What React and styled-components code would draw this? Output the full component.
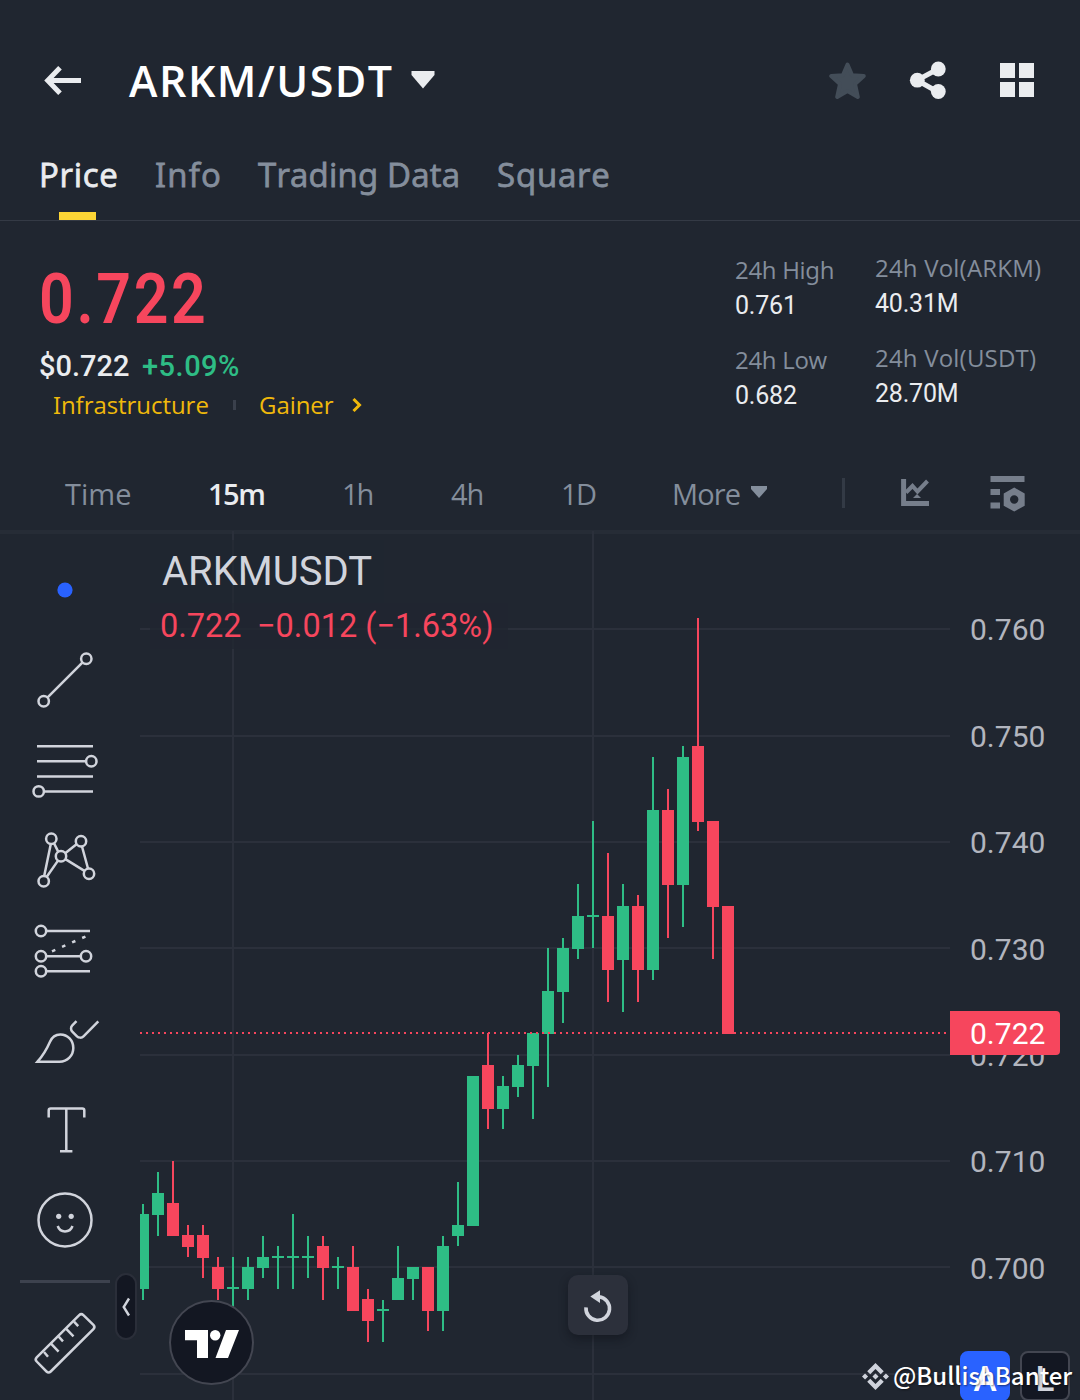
import React from 'react';
import styled, { createGlobalStyle } from 'styled-components';
import { SiBinance } from 'react-icons/si';

const colors = {
  bg: '#202630',
  text: '#eaecef',
  muted: '#848e9c',
  up: '#2ebd85',
  down: '#f6465d',
  brand: '#fcd535',
  tag: '#f0b90b',
  grid: '#2b303b',
  icon: '#d1d4dc',
  dark: '#131722',
};

const GlobalStyle = createGlobalStyle`
  * {
    box-sizing: border-box;
  }
  body {
    margin: 0;
    background-color: ${colors.bg};
  }
`;

const Page = styled.div`
  width: 1080px;
  height: 1400px;
  overflow: hidden;
  position: relative;
  display: flex;
  flex-direction: column;
  background-color: ${colors.bg};
  color: ${colors.text};
  font-family: "Open Sans", "Noto Sans", sans-serif;
  font-feature-settings: "ss01";
  white-space: nowrap;

  svg {
    display: block;
    flex: none;
  }
`;

/* header */

const Header = styled.header`
  height: 80px;
  margin: 40px 0 1px;
  padding: 0 44px 0 43px;
  display: flex;
  align-items: center;
`;

const Title = styled.h1`
  width: 262px;
  margin: 2px 20px 0 48px;
  font-size: 43px;
  line-height: 60px;
  font-weight: 600;
  letter-spacing: 1.5px;
  color: #ffffff;
`;

const Actions = styled.div`
  display: flex;
  align-items: center;
  margin-left: auto;
`;

const ShareSlot = styled.div`
  margin: 0 53px 0 42px;
`;

/* tabs */

const Tabs = styled.nav`
  height: 100px;
  flex: none;
  display: grid;
  grid-template-columns: 116px 103px 239px auto;
  padding-left: 39px;
  border-bottom: 1px solid #343a45;
`;

const Tab = styled.div`
  width: fit-content;
  padding-top: 34px;
  display: flex;
  flex-direction: column;
  align-items: center;
  font-size: 33px;
  line-height: 40px;
  letter-spacing: ${({ $spacing }) => $spacing}px;
  color: ${({ $active }) => ($active ? colors.text : colors.muted)};
  -webkit-text-stroke: 0.8px currentColor;
`;

const Underline = styled.div`
  width: 37px;
  height: 8px;
  margin: 17px 2px 0 0;
  background-color: ${colors.brand};
`;

/* ticker summary */

const Summary = styled.section`
  height: 237px;
  flex: none;
  display: flex;
  padding-left: 39px;
`;

const Quote = styled.div`
  width: 696px;
  padding-top: 48px;
  font-family: Roboto, sans-serif;
`;

const LastPrice = styled.div`
  font-size: 70px;
  line-height: 60px;
  font-weight: 600;
  letter-spacing: 3px;
  color: ${colors.down};
  transform: scaleX(0.87);
  transform-origin: left;
`;

const Change = styled.div`
  display: grid;
  grid-template-columns: 103px auto;
  margin-top: 20px;
  font-size: 29px;
  line-height: 34px;
  font-weight: 500;
`;

const Percent = styled.span`
  letter-spacing: 0.5px;
  color: ${colors.up};
`;

const Tags = styled.div`
  display: flex;
  align-items: center;
  margin-top: 5px;
  padding-left: 14px;
  font-family: "Open Sans", sans-serif;
  font-size: 24px;
  line-height: 34px;
  letter-spacing: -0.05px;
  color: ${colors.tag};
`;

const Tag = styled.span`
  width: ${({ $width }) => $width}px;
`;

const TagDivider = styled.i`
  width: 3px;
  height: 10px;
  margin: 0 23px 0 24px;
  background-color: #3a404c;
`;

const StatColumn = styled.div`
  width: ${({ $width }) => $width}px;
  padding-top: ${({ $top }) => $top}px;
`;

const Stat = styled.div`
  height: 90px;
  font-size: 24px;
  line-height: 34px;
`;

const StatLabel = styled.div`
  letter-spacing: ${({ $spacing }) => $spacing}px;
  color: ${colors.muted};
`;

const StatValue = styled.div`
  margin-top: 2px;
  font-family: Roboto, sans-serif;
  font-size: 25px;
  letter-spacing: -0.2px;
`;

/* interval bar */

const Intervals = styled.div`
  height: 72px;
  flex: none;
  display: grid;
  grid-template-columns: 143px 134px 109px 110px 111px 170px 59px 89px auto;
  align-items: center;
  padding-left: 65px;
  font-size: 29px;
  line-height: 40px;
  color: ${colors.muted};
`;

const Interval = styled.span`
  display: flex;
  align-items: center;
  gap: 11px;
  letter-spacing: ${({ $spacing }) => $spacing || 0}px;
  ${({ $active }) => $active && `color: ${colors.text}; font-weight: 600;`}
`;

const Divider = styled.div`
  width: 3px;
  height: 30px;
  margin-bottom: 2px;
  background-color: #333a45;
`;

/* chart */

const Chart = styled.section`
  position: relative;
  height: 870px;
  display: flex;
  box-shadow: inset 0 4px 0 #262c36;
`;

const Toolbar = styled.aside`
  width: 140px;
  flex: none;
  display: flex;
  flex-direction: column;
  padding: 15px 0 0 20px;
`;

const ToolIcon = styled.svg`
  width: 90px;
  height: 90px;
  fill: none;
  stroke: ${colors.icon};
  stroke-width: 2.5;
`;

const ToolSeparator = styled.div`
  width: 90px;
  height: 3px;
  flex: none;
  margin: 15px 0;
  background-color: #3d424e;
`;

const Legend = styled.div`
  position: absolute;
  left: 150px;
  top: 10px;
  font-family: Roboto, sans-serif;
`;

const Symbol = styled.div`
  width: 234px;
  height: 63px;
  padding: 8px 0 0 12px;
  font-size: 40px;
  line-height: 48px;
  color: ${colors.icon};
  background-color: rgba(32, 38, 48, 0.6);
`;

const LegendValues = styled.div`
  display: grid;
  grid-template-columns: 97px auto;
  width: 358px;
  height: 46px;
  padding-left: 10px;
  font-size: 32.5px;
  line-height: 47px;
  color: ${colors.down};
  background-color: rgba(32, 38, 48, 0.75);
`;

const Collapse = styled.div`
  position: absolute;
  left: 115px;
  top: 743px;
  width: 22px;
  height: 67px;
  display: flex;
  align-items: center;
  justify-content: center;
  border: 2px solid #2a2e39;
  border-radius: 11px;
  background-color: ${colors.dark};
`;

const Badge = styled.div`
  position: absolute;
  left: 169px;
  top: 770px;
  width: 85px;
  height: 85px;
  display: flex;
  align-items: center;
  justify-content: center;
  padding-top: 2px;
  border: 2.5px solid #434651;
  border-radius: 50%;
  background-color: ${colors.dark};
`;

const Reset = styled.div`
  position: absolute;
  left: 568px;
  top: 745px;
  width: 60px;
  height: 60px;
  border-radius: 10px;
  background-color: #2c303b;
  box-shadow: 0 4px 10px rgba(10, 13, 20, 0.45);
`;

const ScaleButtons = styled.div`
  position: absolute;
  left: 960px;
  top: 821px;
  display: flex;
  gap: 10px;
`;

const ScaleButton = styled.div`
  width: 50px;
  height: 50px;
  border-radius: 8px;
  border: 2px solid ${({ $active }) => ($active ? '#2962ff' : '#434651')};
  background-color: ${({ $active }) => ($active ? '#2962ff' : colors.dark)};
  color: ${({ $active }) => ($active ? '#ffffff' : colors.icon)};
  font-family: Roboto, sans-serif;
  font-size: 35px;
  font-weight: 500;
  line-height: 54px;
  text-align: center;
`;

const Handle = styled.div`
  position: absolute;
  left: 862px;
  top: 1357px;
  display: flex;
  align-items: center;
  gap: 4px;
  font-family: "Noto Sans CJK SC", sans-serif;
  font-size: 24px;
  font-weight: 500;
  line-height: 36px;
  color: #ffffff;
  text-shadow: 1px 1px 2px rgba(0, 0, 0, 0.5);

  svg {
    margin-top: 2px;
    color: #cfd3dc;
  }
`;

// open, high, low, close in thousandths
const candles = [
  [698, 706, 697, 705], [705, 709, 703, 707], [706, 710, 703, 703], [703, 704, 701, 702],
  [703, 704, 699, 701], [700, 701, 697, 698], [698, 701, 696, 698], [698, 701, 697, 700],
  [700, 703, 699, 701], [701, 702, 698, 701], [701, 705, 698, 701], [701, 703, 699, 701],
  [702, 703, 697, 700], [700, 701, 698, 700], [700, 702, 696, 696], [697, 698, 693, 695],
  [696, 697, 693, 696], [697, 702, 697, 699], [699, 700, 697, 700], [700, 700, 694, 696],
  [696, 703, 694, 702], [703, 708, 702, 704], [704, 718, 704, 718], [719, 722, 713, 715],
  [715, 718, 713, 717], [717, 720, 716, 719], [719, 722, 714, 722], [722, 730, 717, 726],
  [726, 731, 723, 730], [730, 736, 729, 733], [733, 742, 730, 733], [733, 739, 725, 728],
  [729, 736, 724, 734], [734, 735, 725, 728], [728, 748, 727, 743], [743, 745, 731, 736],
  [736, 749, 732, 748], [749, 761, 741, 742], [742, 742, 729, 734], [734, 734, 722, 722],
];

const levels = [760, 750, 740, 730, 720, 710, 700, 690];

const yOf = (price) => Math.round(99.2 + (760 - price) * 10.633);
const wickY = (price) => Math.round(99 + (760 - price) * 10.643);

const Candle = ({ index, data }) => {
  const [open, high, low, close] = data;
  const x = 3 + index * 15;
  const flat = open === close;
  const top = yOf(Math.max(open, close));
  const bottom = yOf(Math.min(open, close)) + 1;
  const left = Math.max(0, x - 6);
  return (
    <g fill={close >= open ? colors.up : colors.down}>
      <rect x={x - 1} y={wickY(high)} width="2" height={wickY(low) - wickY(high)} />
      <rect x={left} y={flat ? top - 1 : top} width={x + 6 - left} height={flat ? 2 : bottom - top} />
    </g>
  );
};

const PriceChart = () => (
  <svg width="940" height="870" viewBox="0 0 940 870">
    <g fill={colors.grid}>
      {levels.map((level) => (
        <rect key={level} x="0" y={yOf(level) - 1} width="810" height="2" />
      ))}
      <rect x="92" y="1" width="2" height="869" />
      <rect x="452" y="1" width="2" height="869" />
    </g>
    {candles.map((data, i) => (
      <Candle key={i} index={i} data={data} />
    ))}
    <line x1="0" x2="810" y1="503" y2="503" stroke={colors.down} strokeWidth="2" strokeDasharray="2 4" />
    <g fontFamily="Roboto, sans-serif" fontSize="30" fill="#b2b5be">
      {levels.slice(0, 7).map((level) => (
        <text key={level} x="830" y={110.3 + (760 - level) * 10.643}>{(level / 1000).toFixed(3)}</text>
      ))}
      <path d="M810 481h106a4 4 0 0 1 4 4v36a4 4 0 0 1-4 4H810z" fill={colors.down} />
      <text x="830" y="514" fill="#ffffff">0.722</text>
    </g>
  </svg>
);

const DrawingTools = () => (
  <Toolbar>
    <ToolIcon viewBox="0 0 90 90">
      <circle cx="45" cy="45" r="7.6" fill="#2962ff" stroke="none" />
    </ToolIcon>
    <ToolIcon viewBox="0 0 90 90">
      <circle cx="23.7" cy="66.3" r="5.2" />
      <circle cx="66.3" cy="23.7" r="5.2" />
      <path d="M27.4 62.6 62.6 27.4" />
    </ToolIcon>
    <ToolIcon viewBox="0 0 90 90">
      <path d="M17 21.3h56M17 36.3h49M17 51.4h56M24 66.4h49" />
      <circle cx="71.3" cy="36.3" r="5.2" />
      <circle cx="18.7" cy="66.4" r="5.2" />
    </ToolIcon>
    <ToolIcon viewBox="0 0 90 90">
      <path d="M30.8 28.9 24.2 61.1M34 28.2l4.2 8.4M45.2 38.3l11.3-9M62 31.5l6 22M45.4 44.1l19 11.8M38 45.6 26.6 62" />
      <circle cx="31.3" cy="23.7" r="5.2" />
      <circle cx="61" cy="26.3" r="5.2" />
      <circle cx="41" cy="41.3" r="5.2" />
      <circle cx="69" cy="58.7" r="5.2" />
      <circle cx="23.7" cy="66.3" r="5.2" />
    </ToolIcon>
    <ToolIcon viewBox="0 0 90 90">
      <path d="M26 26h44M26 51.3h35M26 66.3h44" />
      <path d="M32 46.4 66 31.3" strokeDasharray="3.6 7.4" />
      <circle cx="21" cy="26" r="5.2" />
      <circle cx="21" cy="51.3" r="5.2" />
      <circle cx="66" cy="51.3" r="5.2" />
      <circle cx="21" cy="66.3" r="5.2" />
    </ToolIcon>
    <ToolIcon viewBox="0 0 90 90">
      <path d="M17.5 66.7H39.5C47.5 66.7 53.3 60.5 53.3 53 53.3 45.5 47.8 39.5 40.3 39.5 35 39.5 31.8 42.5 30 46.8 26.6 54.6 23.5 60 17.5 66.7Z" />
      <path d="M56.5 26.2 52.3 30.4C50.6 32.1 50.6 34.9 52.3 36.6L57 41.3C58.7 43 61.8 43.1 63.5 41.4L78.300 26.400" />
    </ToolIcon>
    <ToolIcon viewBox="0 0 90 90">
      <path d="M28.700 32.500v-7a2 2 0 0 1 2-2h31.600a2 2 0 0 1 2 2v7M46.300 23.500v42.800M40 66.300h12.400" />
    </ToolIcon>
    <ToolIcon viewBox="0 0 90 90">
      <circle cx="45" cy="45" r="26.5" />
      <circle cx="38.7" cy="41.3" r="2.6" fill={colors.icon} stroke="none" />
      <circle cx="51.2" cy="41.3" r="2.6" fill={colors.icon} stroke="none" />
      <path d="M37.700 51c1.200 3.500 4 5.400 7.300 5.400s6.300-1.900 7.500-5.400" />
    </ToolIcon>
    <ToolSeparator />
    <ToolIcon viewBox="0 0 90 90" strokeLinejoin="round">
      <path d="M59.200 17.200a3 3 0 0 1 4.200 0l10 9.700a3 3 0 0 1 0 4.200L30.700 73.500a3 3 0 0 1-4.200 0L16.700 63.500a3 3 0 0 1 0-4.200Z" />
      <path d="M24 54l4 4.700M31 45.700l7.600 8M38.700 38.700l4.300 4.600M46 30.700l7.500 7.600M54 23.700l4.200 4.500" />
    </ToolIcon>
  </Toolbar>
);

const stats = [
  { top: 32, width: 140, spacing: -0.3, items: [['24h High', '0.761'], ['24h Low', '0.682']] },
  { top: 30, width: 180, spacing: 0.2, items: [['24h Vol(ARKM)', '40.31M'], ['24h Vol(USDT)', '28.70M']] },
];

const App = () => {
  return (
    <Page>
      <GlobalStyle />
      <Header>
        <svg width="38" height="34" viewBox="0 0 38 34" fill="none" stroke={colors.text} strokeWidth="5">
          <path d="M38 17.500H4.500M17 4.700 4.700 17.500 17 30.300" />
        </svg>
        <Title>ARKM/USDT</Title>
        <svg width="24" height="20" viewBox="0 0 24 20" fill={colors.text}>
          <path d="M.5 1h23v4L12 18.500.5 5z" />
        </svg>
        <Actions>
          <svg width="38" height="40" viewBox="0 0 38 40" fill="#434d58" stroke="#434d58" strokeWidth="4" strokeLinejoin="round">
            <path d="M18.500 4.500 23.100 15.300 34.800 16 26 24 28.800 37 18.500 31 8.200 37 11 24 2.200 16 13.900 15.300Z" />
          </svg>
          <ShareSlot>
            <svg width="38" height="38" viewBox="0 0 38 38" fill={colors.text}>
              <path d="M29 8 8 19.200 29 31" fill="none" stroke={colors.text} strokeWidth="5" />
              <circle cx="8.300" cy="19.200" r="7.400" />
              <circle cx="29.300" cy="8" r="7.400" />
              <circle cx="29.300" cy="30.500" r="7.400" />
            </svg>
          </ShareSlot>
          <svg width="36" height="36" viewBox="0 0 36 36" fill={colors.text}>
            <path d="M0 1h15v15H0zM19 1h15v15H19zM0 20h15v15H0zM19 20h15v15H19z" />
          </svg>
        </Actions>
      </Header>

      <Tabs>
        <Tab $active $spacing={0.7}>
          Price
          <Underline />
        </Tab>
        <Tab $spacing={1.2}>Info</Tab>
        <Tab $spacing={0.2}>Trading Data</Tab>
        <Tab $spacing={0.8}>Square</Tab>
      </Tabs>

      <Summary>
        <Quote>
          <LastPrice>0.722</LastPrice>
          <Change>
            <span>$0.722</span>
            <Percent>+5.09%</Percent>
          </Change>
          <Tags>
            <Tag $width={156}>Infrastructure</Tag>
            <TagDivider />
            <Tag $width={93}>Gainer</Tag>
            <svg width="10" height="16" viewBox="0 0 10 16" fill="none" stroke={colors.tag} strokeWidth="3">
              <path d="M1.500 2 7.500 8 1.500 14" />
            </svg>
          </Tags>
        </Quote>
        {stats.map(({ top, width, spacing, items }) => (
          <StatColumn key={top} $top={top} $width={width}>
            {items.map(([label, value]) => (
              <Stat key={label}>
                <StatLabel $spacing={spacing}>{label}</StatLabel>
                <StatValue>{value}</StatValue>
              </Stat>
            ))}
          </StatColumn>
        ))}
      </Summary>

      <Intervals>
        <Interval>Time</Interval>
        <Interval $active $spacing={-1.5}>15m</Interval>
        <Interval $spacing={-2}>1h</Interval>
        <Interval $spacing={-1}>4h</Interval>
        <Interval $spacing={-1.6}>1D</Interval>
        <Interval $spacing={-0.9}>
          More
          <svg width="16" height="16" viewBox="0 0 16 16" fill={colors.muted}>
            <path d="M0 0h16v3L8 12 0 3z" />
          </svg>
        </Interval>
        <Divider />
        <svg width="28" height="34" viewBox="0 0 28 34" fill="none" stroke="#767e8b" strokeWidth="4">
          <path d="M2.600 2v24.500H28" strokeWidth="5" />
          <path d="M5 15.500 11.500 9l5 5.500L26.500 4" />
          <path d="M12 21h8l-4-4z" fill="#767e8b" stroke="none" />
        </svg>
        <svg width="36" height="38" viewBox="0 0 36 38" fill="#767e8b">
          <path d="M.5 1h34v6H.5zM.5 14H10v6H.5zM.5 27.500H10v6H.5z" />
          <path fillRule="evenodd" d="M24.200 12.500 34.700 18.500v12.200L24.200 36.500 13.700 30.700V18.500zM24.200 20.300a4.200 4.200 0 1 0 0 8.400 4.200 4.200 0 0 0 0-8.400z" />
        </svg>
      </Intervals>

      <Chart>
        <DrawingTools />
        <PriceChart />
        <Legend>
          <Symbol>ARKMUSDT</Symbol>
          <LegendValues>
            <span>0.722</span>
            <span>−0.012 (−1.63%)</span>
          </LegendValues>
        </Legend>
        <Collapse>
          <svg width="10" height="20" viewBox="0 0 10 20" fill="none" stroke={colors.icon} strokeWidth="2.400">
            <path d="M8 1.500 2.700 10l5.300 8.500" />
          </svg>
        </Collapse>
        <Badge>
          <svg width="54" height="28" viewBox="0 0 54 28" fill="#ffffff">
            <path d="M0 0h23v28H12V10.300H0zM41 0h13L43 28H30.500z" />
            <circle cx="30.200" cy="5.200" r="5.200" />
          </svg>
        </Badge>
        <Reset>
          <svg width="60" height="60" viewBox="0 0 60 60">
            <path d="M18 32.300A11.800 11.800 0 1 0 31 21.700" fill="none" stroke={colors.icon} strokeWidth="3.600" />
            <path d="M22.300 21.500 32 15.300V28z" fill={colors.icon} />
          </svg>
        </Reset>
        <ScaleButtons>
          <ScaleButton $active>A</ScaleButton>
          <ScaleButton>L</ScaleButton>
        </ScaleButtons>
      </Chart>

      <Handle>
        <SiBinance size={27} />
        @BullishBanter
      </Handle>
    </Page>
  );
};

export default App;
